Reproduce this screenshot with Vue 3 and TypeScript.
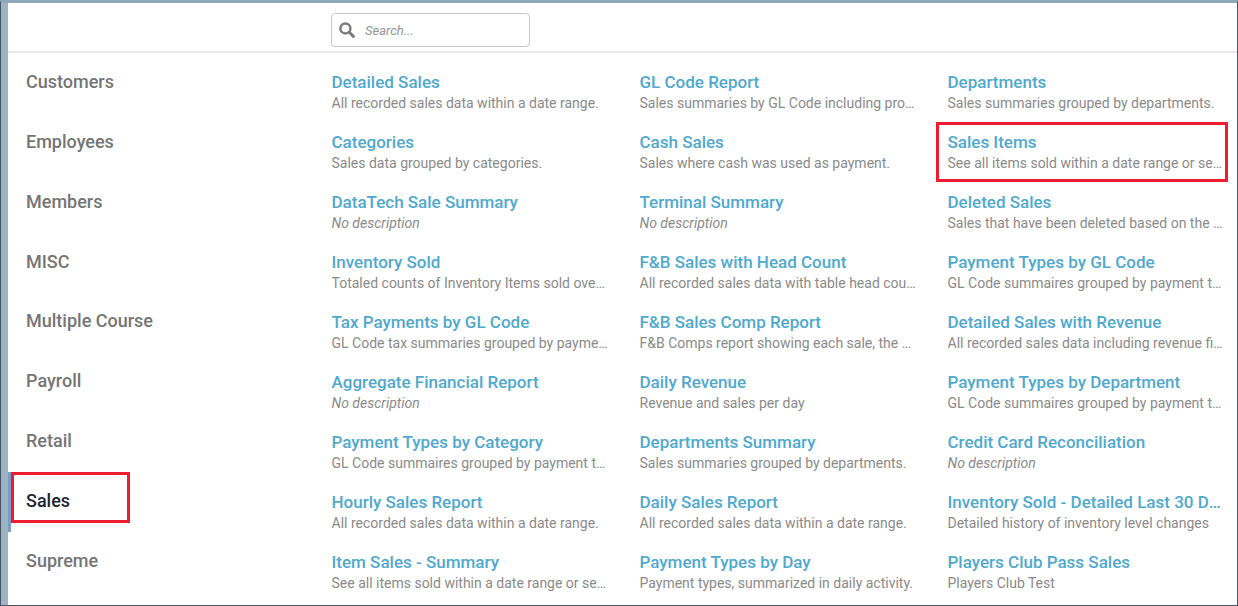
<script setup lang="ts">
interface Report { title: string; desc: string; boxed?: boolean }
const categories: string[] = ['Customers', 'Employees', 'Members', 'MISC', 'Multiple Course', 'Payroll', 'Retail', 'Sales', 'Supreme']
const reports: Report[] = [
  { title: 'Detailed Sales', desc: 'All recorded sales data within a date range.' },
  { title: 'GL Code Report', desc: 'Sales summaries by GL Code including product details.' },
  { title: 'Departments', desc: 'Sales summaries grouped by departments.' },
  { title: 'Categories', desc: 'Sales data grouped by categories.' },
  { title: 'Cash Sales', desc: 'Sales where cash was used as payment.' },
  { title: 'Sales Items', desc: 'See all items sold within a date range or search by item.', boxed: true },
  { title: 'DataTech Sale Summary', desc: '' },
  { title: 'Terminal Summary', desc: '' },
  { title: 'Deleted Sales', desc: 'Sales that have been deleted based on the date range.' },
  { title: 'Inventory Sold', desc: 'Totaled counts of Inventory Items sold over a date range.' },
  { title: 'F&B Sales with Head Count', desc: 'All recorded sales data with table head count included.' },
  { title: 'Payment Types by GL Code', desc: 'GL Code summaires grouped by payment type and date.' },
  { title: 'Tax Payments by GL Code', desc: 'GL Code tax summaries grouped by payment type and date.' },
  { title: 'F&B Sales Comp Report', desc: 'F&B Comps report showing each sale, the amount and reason.' },
  { title: 'Detailed Sales with Revenue', desc: 'All recorded sales data including revenue fields and totals.' },
  { title: 'Aggregate Financial Report', desc: '' },
  { title: 'Daily Revenue', desc: 'Revenue and sales per day' },
  { title: 'Payment Types by Department', desc: 'GL Code summaires grouped by payment type and date.' },
  { title: 'Payment Types by Category', desc: 'GL Code summaires grouped by payment type and date.' },
  { title: 'Departments Summary', desc: 'Sales summaries grouped by departments.' },
  { title: 'Credit Card Reconciliation', desc: '' },
  { title: 'Hourly Sales Report', desc: 'All recorded sales data within a date range.' },
  { title: 'Daily Sales Report', desc: 'All recorded sales data within a date range.' },
  { title: 'Inventory Sold - Detailed Last 30 Days Report', desc: 'Detailed history of inventory level changes' },
  { title: 'Item Sales - Summary', desc: 'See all items sold within a date range or search by item.' },
  { title: 'Payment Types by Day', desc: 'Payment types, summarized in daily activity.' },
  { title: 'Players Club Pass Sales', desc: 'Players Club Test' },
]
</script>

<template>
  <div class="frame">
    <header class="top">
      <label class="search">
        <svg class="glass" viewBox="0 0 16 16" width="16" height="16" aria-hidden="true">
          <circle cx="6.4" cy="6.4" r="5" fill="none" stroke="currentColor" stroke-width="2.5" />
          <path d="M10.2 10.2 L14.4 14.4" stroke="currentColor" stroke-width="3" stroke-linecap="round" />
        </svg>
        <input class="field" type="text" placeholder="Search..." />
      </label>
    </header>
    <div class="body">
      <nav class="side">
        <div v-for="c in categories" :key="c" class="cat" :class="{ active: c === 'Sales' }">
          {{ c }}
          <template v-if="c === 'Sales'">
            <span class="accent"></span>
            <span class="mark side-mark"></span>
          </template>
        </div>
      </nav>
      <main class="grid">
        <article v-for="r in reports" :key="r.title" class="item">
          <a class="title">{{ r.title }}</a>
          <p v-if="r.desc" class="desc">{{ r.desc }}</p>
          <p v-else class="desc none">No description</p>
          <span v-if="r.boxed" class="mark item-mark"></span>
        </article>
      </main>
    </div>
  </div>
</template>

<style>
html, body { margin: 0; background: #fff; }
</style>

<style scoped>
.frame {
  box-sizing: border-box;
  width: 1238px;
  height: 606px;
  overflow: hidden;
  background: #fff;
  border-left: 1px solid #4a5361;
  border-right: 1px solid #4a5361;
  border-bottom: 1px solid #4a5361;
  border-top: 3px solid #8fa9b8;
  font-family: Roboto, "Liberation Sans", sans-serif;
  display: flex;
  flex-direction: column;
  position: relative;
}
.frame::before {
  content: "";
  position: absolute;
  left: 0;
  top: 0;
  bottom: 0;
  width: 7px;
  background: #9db4c4;
}
.top {
  box-sizing: border-box;
  height: 50px;
  flex: none;
  margin-left: 7px;
  padding: 10px 0 0 323px;
  border-bottom: 2px solid #e8e8e8;
}
.search {
  box-sizing: border-box;
  width: 199px;
  height: 34px;
  display: flex;
  align-items: center;
  gap: 10px;
  padding-left: 7px;
  border: 1px solid #c8c8c8;
  border-radius: 4px;
  color: #7c7c7c;
}
.glass { flex: none; }
.field {
  border: 0;
  outline: 0;
  padding: 0;
  width: 150px;
  background: transparent;
  font: italic 13px Roboto, "Liberation Sans", sans-serif;
}
.field::placeholder { color: #969696; opacity: 1; }
.body {
  display: flex;
  flex: 1;
  margin-left: 7px;
  min-height: 0;
}
.side {
  width: 323px;
  flex: none;
  margin-top: -1.55px;
}
.cat {
  box-sizing: border-box;
  height: 59.875px;
  display: flex;
  align-items: center;
  padding-left: 18px;
  font-size: 18px;
  font-weight: 500;
  color: #757575;
  position: relative;
}
.cat.active { color: #1d2530; }
.accent {
  position: absolute;
  left: 0;
  top: 1px;
  width: 3px;
  height: 60px;
  background: #7c9bc9;
}
.grid {
  display: grid;
  grid-template-columns: repeat(3, 278px);
  grid-auto-rows: 60px;
  column-gap: 30px;
  align-content: start;
  padding-left: 0.5px;
}
.item {
  position: relative;
  min-width: 0;
  padding-top: 19px;
}
.title {
  display: block;
  font-size: 17px;
  font-weight: 500;
  line-height: 20px;
  color: #4fa9cf;
  white-space: nowrap;
  overflow: hidden;
  text-overflow: ellipsis;
}
.desc {
  margin: 1px 0 0;
  font-size: 14px;
  line-height: 20px;
  color: #8a8a8a;
  white-space: nowrap;
  overflow: hidden;
  text-overflow: ellipsis;
}
.none { font-style: italic; }
.mark {
  position: absolute;
  box-sizing: border-box;
  border: 3px solid #ed1c2e;
  pointer-events: none;
}
.side-mark { left: 3px; top: 1px; width: 119px; height: 51px; }
.item-mark { left: -11.5px; top: 9px; width: 292px; height: 60px; }
</style>
